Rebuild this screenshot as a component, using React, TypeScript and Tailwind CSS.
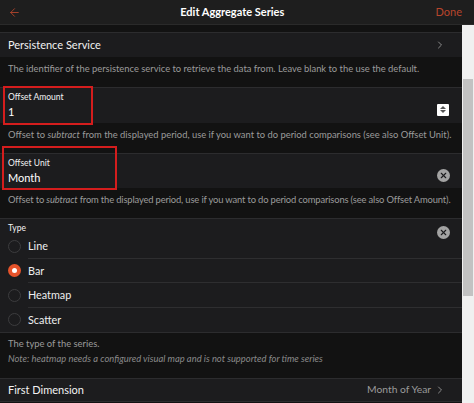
import { ChevronRight, ArrowLeft, X } from "lucide-react";

const font = { fontFamily: 'Lato, "Liberation Sans", sans-serif' };

const Desc = ({ children }: { children: React.ReactNode }) => (
  <div className="h-[30px] bg-[#121212] px-2 pt-[5px] text-[9.4px] leading-[13px] text-[#9b9b9b] whitespace-nowrap">
    {children}
  </div>
);

const ClearIcon = () => (
  <span className="w-[13px] h-[13px] rounded-full bg-[#a3a3a3] flex items-center justify-center">
    <X size={9} strokeWidth={3} className="text-[#1c1c1e]" />
  </span>
);

const Radio = ({ label, checked, last }: { label: string; checked?: boolean; last?: boolean }) => (
  <div className="flex items-center h-[24.5px]">
    <div className="w-[28px] flex justify-center pl-[1px]">
      {checked ? (
        <span className="w-[13px] h-[13px] rounded-full bg-[#e5532b] flex items-center justify-center">
          <span className="w-[5px] h-[5px] rounded-full bg-white" />
        </span>
      ) : (
        <span className="w-[13px] h-[13px] rounded-full border border-[#3c3c3e]" />
      )}
    </div>
    <div className={`flex-1 h-full flex items-center pt-[1px] text-[10.8px] text-[#eeeeee] ${last ? "" : "border-b border-[#2e2e30]"}`}>
      {label}
    </div>
  </div>
);

export default function App() {
  return (
    <div className="w-[474px] h-[403px] bg-[#121212] overflow-hidden flex flex-col" style={font}>
      {/* top bar */}
      <div className="h-[25px] bg-[#1e1e1e] flex items-center justify-between px-[8px] border-b border-[#2a2a2a]">
        <ArrowLeft size={13} strokeWidth={1.6} className="text-[#b8452c]" />
        <span className="text-[11px] font-bold text-white pl-[8px]">Edit Aggregate Series</span>
        <span className="text-[11px] text-[#b8452c] pr-[4px]">Done</span>
      </div>

      <div className="flex flex-1 min-h-0">
        <div className="flex-1 min-w-0 flex flex-col">
          <div className="h-[8px] bg-[#121212] border-b border-[#2c2c2e]" />

          <div className="h-[24px] bg-[#1c1c1e] flex items-center justify-between px-2">
            <span className="text-[11px] text-[#f2f2f2]">Persistence Service</span>
            <ChevronRight size={12} className="text-[#8a8a8a] mr-[8px]" />
          </div>
          <Desc>The identifier of the persistence service to retrieve the data from. Leave blank to the use the default.</Desc>

          <div className="relative h-[36px] bg-[#1c1c1e] border-t border-[#2c2c2e] flex items-center justify-between px-2">
            <div className="flex flex-col">
              <span className="text-[8.5px] leading-[12px] text-[#f2f2f2]">Offset Amount</span>
              <span className="text-[11px] leading-[17px] text-white">1</span>
            </div>
            <span className="w-[12px] h-[12px] bg-white rounded-[1px] flex flex-col items-center justify-center gap-[1px] mr-[5px] mt-[8px]">
              <span className="w-0 h-0 border-l-[3px] border-r-[3px] border-b-[3px] border-l-transparent border-r-transparent border-b-[#555]" />
              <span className="w-0 h-0 border-l-[3px] border-r-[3px] border-t-[3px] border-l-transparent border-r-transparent border-t-[#555]" />
            </span>
            <div className="absolute left-[3px] top-[-2px] w-[90px] h-[39px] border-2 border-[#d41d1d]" />
          </div>
          <Desc>
            <span>Offset to <i>subtract</i> from the displayed period, use if you want to do period comparisons (see also Offset Unit).</span>
          </Desc>

          <div className="relative h-[35px] bg-[#1c1c1e] border-t border-[#2c2c2e] flex items-center justify-between px-2">
            <div className="flex flex-col">
              <span className="text-[8.5px] leading-[12px] text-[#f2f2f2]">Offset Unit</span>
              <span className="text-[11px] leading-[17px] text-white">Month</span>
            </div>
            <span className="mr-[4px] mt-[8px]"><ClearIcon /></span>
            <div className="absolute left-[2px] top-[-8px] w-[115px] h-[44px] border-2 border-[#d41d1d]" />
          </div>
          <Desc>
            <span className="tracking-[-0.15px]">Offset to <i>subtract</i> from the displayed period, use if you want to do period comparisons (see also Offset Amount).</span>
          </Desc>

          <div className="bg-[#1c1c1e] border-t border-[#2c2c2e]">
            <div className="flex items-start justify-between px-2 pt-[3px] h-[15px]">
              <span className="text-[8.5px] leading-[12px] text-[#f2f2f2]">Type</span>
              <span className="mr-[4px] mt-[4px]"><ClearIcon /></span>
            </div>
            <Radio label="Line" />
            <Radio label="Bar" checked />
            <Radio label="Heatmap" />
            <Radio label="Scatter" last />
          </div>
          <div className="bg-[#121212] border-t border-[#2c2c2e] h-[46px] px-2 pt-[3px] text-[9.4px] leading-[15px] text-[#9b9b9b]">
            <div>The type of the series.</div>
            <div className="italic text-[#8a8a8a]">Note: heatmap needs a configured visual map and is not supported for time series</div>
          </div>

          <div className="h-[24px] bg-[#1c1c1e] border-t border-b border-[#2c2c2e] flex items-center justify-between px-2">
            <span className="text-[11px] text-[#f2f2f2]">First Dimension</span>
            <span className="flex items-center gap-[3px] text-[10.3px] text-[#9a9a9a] mr-[8px]">
              Month of Year
              <ChevronRight size={12} className="text-[#8a8a8a]" />
            </span>
          </div>
        </div>

        {/* scrollbar */}
        <div className="w-[12px] bg-[#f0f0f0] flex flex-col">
          <div className="h-[54px]" />
          <div className="h-[217px] bg-[#c2c2c2] mx-[1px]" />
        </div>
      </div>
    </div>
  );
}
